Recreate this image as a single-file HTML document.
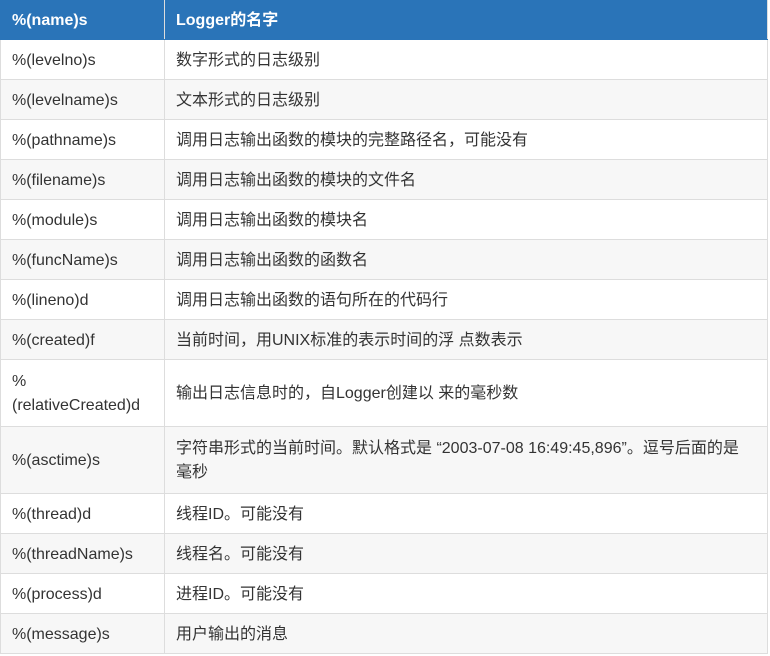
<!DOCTYPE html>
<html><head><meta charset="utf-8"><style>
body{margin:0;background:#fff;}
table{border-collapse:collapse;width:768px;table-layout:fixed;font-family:"Liberation Sans","Noto Sans CJK SC",sans-serif;font-size:16px;color:#333;}
td,th{border:1px solid #ddd;padding:2px 11px 0;text-align:left;vertical-align:middle;line-height:24px;}
th{background:#2a74b8;color:#fff;font-weight:bold;height:37px;border-color:#2a74b8 #ddd;border-top:0}
th:first-child{border-left:1px solid #2a74b8}
td{height:37px;}
tr:nth-child(odd) td{background:#f7f7f7;}
tr.t td{height:64px;}
col.a{width:164px}
</style></head><body>
<table>
<colgroup><col class="a"><col></colgroup>
<tr><th>%(name)s</th><th>Logger的名字</th></tr>
<tr><td>%(levelno)s</td><td>数字形式的日志级别</td></tr>
<tr><td>%(levelname)s</td><td>文本形式的日志级别</td></tr>
<tr><td>%(pathname)s</td><td>调用日志输出函数的模块的完整路径名，可能没有</td></tr>
<tr><td>%(filename)s</td><td>调用日志输出函数的模块的文件名</td></tr>
<tr><td>%(module)s</td><td>调用日志输出函数的模块名</td></tr>
<tr><td>%(funcName)s</td><td>调用日志输出函数的函数名</td></tr>
<tr><td>%(lineno)d</td><td>调用日志输出函数的语句所在的代码行</td></tr>
<tr><td>%(created)f</td><td>当前时间，用UNIX标准的表示时间的浮 点数表示</td></tr>
<tr class="t"><td>%<br>(relativeCreated)d</td><td>输出日志信息时的，自Logger创建以 来的毫秒数</td></tr>
<tr class="t"><td>%(asctime)s</td><td>字符串形式的当前时间。默认格式是 “2003-07-08 16:49:45,896”。逗号后面的是<br>毫秒</td></tr>
<tr><td>%(thread)d</td><td>线程ID。可能没有</td></tr>
<tr><td>%(threadName)s</td><td>线程名。可能没有</td></tr>
<tr><td>%(process)d</td><td>进程ID。可能没有</td></tr>
<tr><td>%(message)s</td><td>用户输出的消息</td></tr>
</table>
</body></html>
